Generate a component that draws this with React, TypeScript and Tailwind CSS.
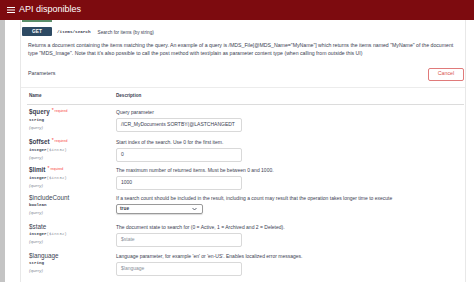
import React from "react";

type Param = {
  name: string;
  required?: boolean;
  type: string;
  format?: string;
  desc: string;
  value?: string;
  placeholder?: string;
  select?: string;
  h: string;
};

const params: Param[] = [
  { name: "$query", required: true, type: "string", desc: "Query parameter", value: "/ICR_MyDocuments SORTBY(@LASTCHANGEDT", h: "h-[30px]" },
  { name: "$offset", required: true, type: "integer", format: "($int32)", desc: "Start index of the search. Use 0 for the first item.", value: "0", h: "h-[28px]" },
  { name: "$limit", required: true, type: "integer", format: "($int32)", desc: "The maximum number of returned items. Must be between 0 and 1000.", value: "1000", h: "h-[28px]" },
  { name: "$includeCount", type: "boolean", desc: "If a search count should be included in the result, including a count may result that the operation takes longer time to execute", select: "true", h: "h-[29px]" },
  { name: "$state", type: "integer", format: "($int32)", desc: "The document state to search for (0 = Active, 1 = Archived and 2 = Deleted).", placeholder: "$state", h: "h-[29px]" },
  { name: "$language", type: "string", desc: "Language parameter, for example 'en' or 'en-US'. Enables localized error messages.", placeholder: "$language", h: "h-[30px]" },
];

function ParamRow({ p }: { p: Param }) {
  return (
    <div className={`flex ${p.h}`}>
      <div className="w-[89px] pl-[2px] pt-[3px] shrink-0">
        <div className={`text-[6.3px] leading-[8px] text-[#3b4151] ${p.required ? "font-bold" : ""}`}>
          {p.name}
          {p.required && (
            <span className="relative -top-[2px] ml-[2px] text-[3.5px] font-normal text-[#f93e3e]">
              <span className="text-[5px]">*</span> required
            </span>
          )}
        </div>
        <div className="font-['Liberation_Mono',monospace] text-[4.2px] leading-[7px] font-bold text-[#3b4151]">
          {p.type}
          {p.format && <span className="font-normal text-[#8a8f99]">{p.format}</span>}
        </div>
        <div className="text-[4.4px] leading-[7px] italic text-[#8a8f99]">(query)</div>
      </div>
      <div className="pt-[4px]">
        <div className="text-[5px] leading-[6px] text-[#3b4151] whitespace-nowrap">{p.desc}</div>
        {p.select ? (
          <div className="mt-[3px] flex h-[10px] w-[87px] items-center justify-between rounded-[2px] border border-[#9a9a9a] px-[3px] shadow-[0_1px_1px_rgba(0,0,0,0.15)]">
            <span className="text-[4.8px] font-bold text-[#3b4151]">{p.select}</span>
            <svg width="5" height="4" viewBox="0 0 10 6" className="mr-[2px]">
              <path d="M1 1l4 4 4-4" fill="none" stroke="#3b4151" strokeWidth="1.6" />
            </svg>
          </div>
        ) : (
          <div className="mt-[3px] flex h-[14px] w-[126px] items-center overflow-hidden rounded-[2px] border border-[#d9d9d9] px-[4px]">
            <span className={`whitespace-nowrap text-[5px] ${p.value ? "text-[#3b4151]" : "text-[#8a8f99]"}`}>
              {p.value ?? p.placeholder}
            </span>
          </div>
        )}
      </div>
    </div>
  );
}

export default function App() {
  return (
    <div className="w-[474px] h-[282px] overflow-hidden bg-white font-['Liberation_Sans',Arial,sans-serif]">
      <header className="flex h-[20px] items-center bg-[#7d0b0f] pl-[7px] text-white">
        <svg width="8" height="6" viewBox="0 0 8 6" className="mr-[4px]">
          <rect x="0" y="0" width="8" height="1" fill="white" />
          <rect x="0" y="2.5" width="8" height="1" fill="white" />
          <rect x="0" y="5" width="8" height="1" fill="white" />
        </svg>
        <span className="text-[9px]">API disponibles</span>
      </header>

      <div className="flex h-[262px]">
        <div className="w-[5px] shrink-0 bg-[#c4c4c4]" />
        <div className="w-[15px] shrink-0" />
        <div className="w-[446px] shrink-0 border-x border-[#e8e8e8] bg-white">
          <div className="ml-[1px] h-[2px] w-[30px] bg-[#5a8f6a]" />

          <div className="flex h-[18px] items-start pt-[5px]">
            <div className="ml-[1px] flex h-[9px] w-[30px] items-center justify-center rounded-[1px] bg-[#2d4a63] text-[4.8px] font-bold text-white">
              GET
            </div>
            <span className="ml-[5px] mt-[2px] font-['Liberation_Mono',monospace] text-[4.3px] font-bold text-[#3b4151]">
              /items/search
            </span>
            <span className="ml-[7px] mt-[2px] text-[4.7px] text-[#3b4151]">Search for items (by string)</span>
          </div>

          <div className="h-[18px] px-[7px] pt-[1px] text-[5.2px] leading-[8px] text-[#3b4151]">
            <p className="whitespace-nowrap">
              Returns a document containing the items matching the query. An example of a query is /MDS_File[@MDS_Name="MyName"] which returns the items named "MyName" of the document
            </p>
            <p className="whitespace-nowrap">
              type "MDS_Image". Note that it's also possible to call the post method with text/plain as parameter content type (when calling from outside this UI)
            </p>
          </div>

          <div className="flex h-[30px] items-center justify-between border-b border-[#ececec] pl-[7px] pr-[1px] pt-[3px]">
            <span className="text-[5.3px] text-[#3b4151]">Parameters</span>
            <div className="flex h-[13px] w-[36px] items-center justify-center rounded-[2px] border border-[#e07a7a] text-[5.3px] text-[#d9534f]">
              Cancel
            </div>
          </div>

          <div className="ml-[6px] mr-[1px]">
            <div className="flex h-[17px] items-end border-b border-[#dcdcdc] pb-[4px] pl-[2px] text-[4.6px] font-bold text-[#3b4151]">
              <span className="w-[87px]">Name</span>
              <span>Description</span>
            </div>
            {params.map((p) => (
              <ParamRow key={p.name} p={p} />
            ))}
          </div>
        </div>
        <div className="flex-1" />
      </div>
    </div>
  );
}
